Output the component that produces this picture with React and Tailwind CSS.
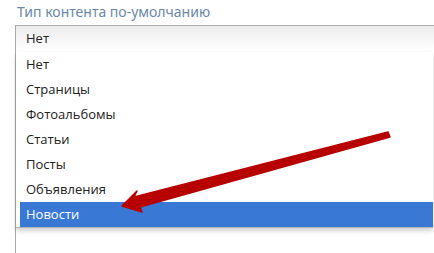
const options = ["Нет", "Страницы", "Фотоальбомы", "Статьи", "Посты", "Объявления", "Новости"];

export default function App() {
  const selected = "Новости";

  return (
    <div className="relative h-[253px] w-[434px] overflow-hidden bg-white font-['Open_Sans',sans-serif]">
      <div className="pl-[17px] pt-[3px] text-[14px] leading-[18px] text-[#6b87aa] font-['Noto_Sans',sans-serif]">
        Тип контента по-умолчанию
      </div>

      <div className="relative ml-[15px] mt-[4px] h-[228px] w-[419px] border-l border-t border-[#a9a9a9]">
        <div className="h-[25px] bg-gradient-to-b from-[#ececec] to-white pl-[10px] pt-[3px] text-[13px] leading-[18px] text-[#222]">
          Нет
        </div>

        <ul className="absolute left-0 right-[1px] top-[26px] border-b border-[#b5b5b5] bg-white pl-[4px] shadow-[0_3px_5px_rgba(0,0,0,0.18)]">
          {options.map((opt) => (
            <li
              key={opt}
              className={`flex h-[25px] items-center pl-[6px] text-[13px] ${
                opt === selected ? "bg-[#3a78d6] text-white" : "text-[#222]"
              }`}
            >
              {opt}
            </li>
          ))}
        </ul>
      </div>

      <svg className="pointer-events-none absolute left-0 top-0" width="434" height="253" viewBox="0 0 434 253">
        <path
          d="M388 132 L390 137 L140 207 L142 212 L122 206 L137 191 L134 197 Z"
          fill="#b70000"
          stroke="#b70000"
          strokeWidth="1.5"
          strokeLinejoin="round"
        />
      </svg>
    </div>
  );
}
